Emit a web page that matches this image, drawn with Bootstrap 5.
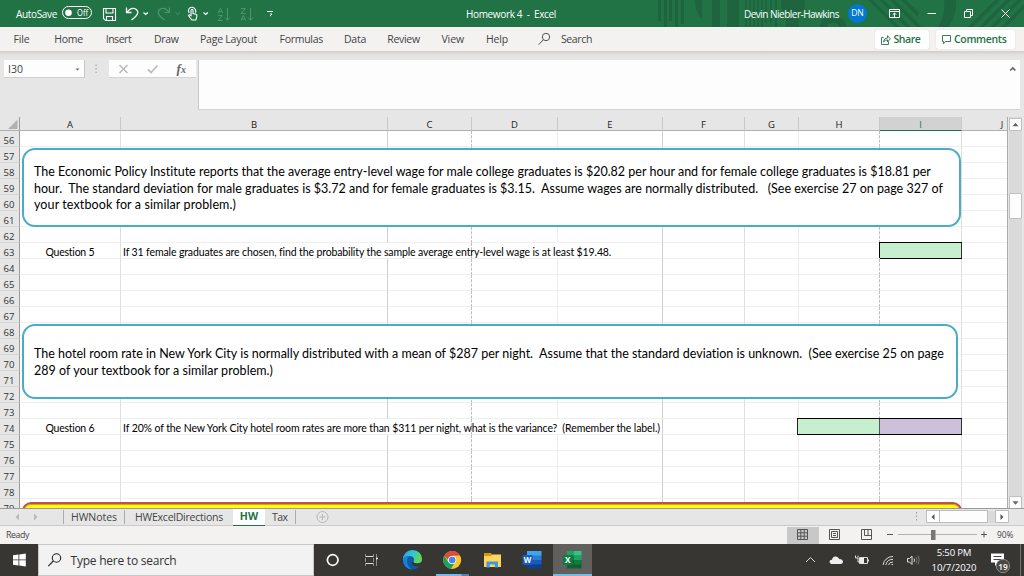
<!DOCTYPE html>
<html lang="en">
<head>
    <meta charset="UTF-8">
    <meta name="viewport" content="width=device-width, initial-scale=1.0">
    <link href="https://cdn.jsdelivr.net/npm/bootstrap@5.3.0/dist/css/bootstrap.min.css" rel="stylesheet">
    <title>Homework 4 - Excel</title>
    <style>
        body {
            width: 1024px;
            height: 576px;
            font-family: "Open Sans", "Noto Sans", sans-serif;
            font-size: 10px;
            line-height: 1;
            color: #444;
            background: #e6e6e6;
        }
        svg { display: block; flex: none; }
        [data-w] { display: inline-block; white-space: pre; flex: none; }

        /* title bar and ribbon */
        .title-bar { height: 27px; background: #217346; color: #fff; }
        .title-art { z-index: 0; }
        .title-bar > :not(.title-art) { position: relative; }
        .title-bar .user-name { margin-left: 188px; padding-top: 1px; }
        .autosave { margin-left: 16px; }
        .file-title { margin-left: 186px; }
        .avatar { width: 19px; height: 19px; margin: 0 8px 0 9px; background: #0078d4; font-size: 8.5px; }
        .ribbon { height: 24px; padding-left: 13.5px; background: #f3f2f1; font-size: 10.5px; }
        .ribbon-tabs { display: grid; grid-template-columns: 40.8px 51.4px 48.3px 46px 79.5px 64.5px 43.3px 54.2px 44.5px 22px; }
        .ribbon-btn { height: 19px; border-radius: 2px; background: #fff; color: #217346; font-weight: 600; box-shadow: 0 0 1px #bbb; }
        .share-btn { width: 54px; margin-left: auto; }
        .comments-btn { width: 79px; margin: 0 9.5px 0 7px; }

        /* formula bar */
        .formula-row { height: 66px; padding: 9px 4px 0; background: linear-gradient(#cfcdcb, #e0dfde 3px, #e6e6e6 7px); }
        .name-box { width: 81px; height: 18px; padding-left: 4px; background: #fdfdfd; border-right: 1px solid #c6c6c6; border-bottom: 1px solid #cfcfcf; font-size: 10.5px; }
        .name-box > span { padding-top: 1px; }
        .fx-box { height: 18px; background: #fdfdfd; border-bottom: 1px solid #d4d4d4; }
        .formula-input { width: 822px; height: 50px; margin-left: 2px; background: #fdfdfd; border-left: 1px solid #c6c6c6; border-bottom: 1px solid #d4d4d4; }

        /* worksheet */
        .sheet-area { height: 392px; }
        .sheet { width: 1008px; height: 391px; background: #fff; border-right: 1px solid #ababab; }
        .sheet-line { display: grid; grid-template-columns: 20px 101px 267px 84px 86px 105px 82px 54px 81px 82px 45px; }
        .col-heads { height: 14px; background: #e6e6e6; color: #222; font-size: 9.5px; }
        .col-heads > div { height: 14px; padding-top: 3px; text-align: center; border-right: 1px solid #c9c9c9; border-bottom: 1px solid #b0b0b0; }
        .col-heads > .corner { padding: 0; border-right-color: #9b9b9b; }
        .col-heads > .picked { background: #d2d2d2; color: #217346; border-bottom: 1px solid #217346; }
        .col-heads > .last-col { padding-left: 35px; border-right: 0; }
        .sheet-row { height: 16px; }
        .row-head { height: 16px; padding-top: 5px; padding-right: 1px; text-align: center; font-size: 9.5px; color: #333; background: #e6e6e6; border-right: 1px solid #9b9b9b; border-bottom: 1px solid #d6d6d6; }
        .cell { height: 16px; min-width: 0; white-space: nowrap; border-right: 1px solid #dedede; border-bottom: 1px solid #efefef; }
        .cell-B, .cell-E { border-right-color: #cfcfcf; }
        .cell-D, .cell-G { border-right-color: #ececec; }
        .cell-C, .cell-H { border-right: 1px dashed #bdbdbd; }
        .cell-J { border-right: 0; }
        .no-edge { border-right-color: transparent; }
        .cell-text { position: relative; z-index: 1; height: 15px; padding: 2px 0 0 2px; font-family: Lato, sans-serif; font-size: 10.5px; line-height: 14px; color: #000; }
        .cell-text > span { vertical-align: top; }
        .cell-A .cell-text { padding-left: 25.5px; }
        .answer { position: relative; z-index: 1; border: 0; }
        .answer.green { background: #c6efce; box-shadow: -1px -1px 0 #000, 0 -1px 0 #000, inset 0 -1px 0 #000, inset -1px 0 0 #333; }
        .answer.purple { background: #ccc0da; box-shadow: 0 -1px 0 #000, inset 0 -1px 0 #000, inset -1px 0 0 #333; }
        .answer.before { margin-left: -2px; box-shadow: 0 -1px 0 #000, inset 0 -1px 0 #000, inset 1px 0 0 #222, inset -1px 0 0 #555; }
        .note-shape { left: 22px; z-index: 2; background: #fff; border: 2px solid #4bacc6; border-radius: 13px; font-family: Lato, sans-serif; font-size: 12.5px; line-height: 16.6px; color: #000; }
        .note-wage { top: 31px; width: 939px; height: 79px; padding: 14px 0 0 10px; }
        .note-hotel { top: 207px; width: 936px; height: 75px; padding: 20px 0 0 10px; }
        .note-yellow { top: 385px; width: 940px; height: 30px; background: #ff0; border-color: #c0504d; border-radius: 9px; box-shadow: inset 0 1px 0 #d8a030; }

        /* scrollbars, sheet tabs, status */
        .v-scroll { width: 13px; margin-left: 1px; background: #dadada; }
        .sheet-tabs { height: 18px; background: #e6e6e6; border-top: 1px solid #9b9b9b; border-bottom: 1px solid #cacaca; margin-top: -1px; font-size: 10.5px; }
        .tab-notes { margin: 0 7px; }
        .tab-directions { margin-left: 10px; }
        .tab-on { height: 17px; width: 32px; background: #fff; color: #217346; font-weight: 700; border-bottom: 1px solid #217346; margin: 0 7px 0 10px; }
        .tab-tax { margin-right: 7px; }
        .tab-sep { width: 1px; height: 14px; background: #ababab; }
        .h-scroll { margin-left: auto; }
        .status-bar { height: 18px; padding-left: 6px; background: #f3f2f1; font-size: 8.8px; }

        /* taskbar */
        .taskbar { height: 32px; background: #383633; color: #fff; }
        .search-box { width: 276px; height: 32px; background: #f2f2f2; border: 1px solid #c8c8c8; color: #333; font-size: 12px; }
        .search-box > span { padding-top: 2px; }
        .clock { width: 56px; font-size: 9.6px; line-height: 15px; }
    </style>
</head>
<body class="d-flex flex-column overflow-hidden m-0">

    <header class="title-bar d-flex align-items-center position-relative overflow-hidden">
        <svg class="title-art position-absolute end-0 top-0" width="370" height="27" viewBox="654 0 370 27" fill="#1e643e">
            <path d="M658 0h3v21h-3zM664 0h3v27h-3zM669 0h3v21h-3zM675 0h3v27h-3zM681 0h3v24h-3z"/>
            <path d="M695 0h7v19q-7-6-7-19zM712 0h8v27h-8zM727 0h12v27h-12z"/>
            <path d="M745 0h2v27h-2zM749 0h2v27h-2zM753 0h2v27h-2zM757 0h2v27h-2zM761 0h2v27h-2zM765 0h2v23h-2zM770 0h2v23h-2zM775 0h2v27h-2z"/>
            <path d="M781 0h24v5q0 7-6 7v15h-13V12q-5 0-5-7z"/>
            <path d="M820 27q0-10 13-10t13 10h-7q0-4-6-4t-6 4z"/>
            <path d="M868 0h5l27 27h-5zM879 0h5l27 27h-5zM890 0h5l27 27h-5zM901 0h5l12 12v5z"/>
            <path d="M944 0h12q1 14-7 27h-11q8-12 6-27zM979 27l27-27h5l-27 27zM990 27l27-27h5l-27 27zM1001 27l23-23v5l-18 18zM968 27l27-27h5l-27 27z"/>
        </svg>
        <span class="autosave" data-w="41">AutoSave</span>
        <svg width="213" height="27" viewBox="57 0 213 27" fill="none" stroke="#fff">
            <rect x="62.500" y="6.500" width="29" height="12" rx="6"/>
            <circle cx="68.500" cy="12.700" r="3.300" fill="#fff" stroke="none"/>
            <text x="77" y="16" font-size="8.500" fill="#fff" stroke="none" textLength="11" lengthAdjust="spacingAndGlyphs">Off</text>
            <path d="M103.500 8.500h12v12h-10l-2-2zM106 8.500v4.500h7V8.500M106.500 20.500v-4h6v4" stroke-width="1.100"/>
            <path d="M126.500 7.500v5h5M127 12.300q3-4.300 6.500-4t4.300 3.700q.4 3-6.300 8" stroke-width="1.300"/>
            <path d="M143.500 12.500l2.200 2 2.200-2" stroke-width="1.200"/>
            <g stroke="#4f9470"><path d="M169.500 7.500v5h-5M169 12.300q-3-4.300-6.500-4t-4.300 3.700q-.4 3 6.300 8" stroke-width="1.200"/><path d="M175.500 12.500l2.200 2 2.200-2"/></g>
            <path d="M191 19l-2.500-3.500q1-1.500 2.500 0V10q1-1.500 2 0v3.500l3 .8q1.300.5.8 2.500l-1 3.200h-3.800zM189.200 12.800q-1.500-2-.2-4t3.500-1.500 3 2.400-.4 2.800" stroke-width="1.100"/>
            <path d="M203.500 12.500l2.200 2 2.200-2" stroke-width="1.200"/>
            <g stroke="#4f9470"><path d="M218 13.200l2.300-5 2.300 5M218.800 11.700h3M218 15.500h4.300l-4.300 5h4.500M227.500 8v12M225 17.500l2.500 2.700 2.500-2.700"/><path d="M241 8.500h4.300l-4.300 5h4.500M241 20.500l2.300-5 2.300 5M241.800 19h3M250.500 8v12M248 17.500l2.500 2.700 2.500-2.700"/></g>
            <path d="M267 11.500h6"/>
        </svg>
        <svg width="10" height="27" viewBox="270 0 10 27" fill="none" stroke="#fff"><path d="M266.500 11.500h6.500M267.500 14l2.300 2.300L272 14z"/></svg>
        <span class="file-title" data-w="90">Homework 4  -  Excel</span>
        <span class="user-name" data-w="95">Devin Niebler-Hawkins</span>
        <span class="avatar rounded-circle d-flex align-items-center justify-content-center">DN</span>
        <svg width="148" height="27" viewBox="875 0 148 27" fill="none" stroke="#fff">
            <path d="M889.500 9.500h10v8h-10zM889.500 11.500h10M894.500 17v-4M892.700 14.800l1.800-1.800 1.800 1.800"/>
            <path d="M927.500 13.500h8.500M964.500 11.500h6v6h-6zM966.500 11.500v-2h6v6h-2M1001.500 9.500l8 8M1009.500 9.500l-8 8"/>
        </svg>
    </header>

    <nav class="ribbon d-flex align-items-center">
        <div class="ribbon-tabs">
            <span data-w="16">File</span>
            <span data-w="28.500">Home</span>
            <span data-w="25.500">Insert</span>
            <span data-w="24.500">Draw</span>
            <span data-w="57">Page Layout</span>
            <span data-w="43.500">Formulas</span>
            <span data-w="22">Data</span>
            <span data-w="32.500">Review</span>
            <span data-w="22.500">View</span>
            <span data-w="22">Help</span>
        </div>
        <svg width="53" height="24" viewBox="508 27 53 24" fill="none" stroke="#555"><circle cx="546" cy="37" r="3.700"/><path d="M543.300 39.700l-4.600 5"/></svg>
        <span data-w="31">Search</span>
        <div class="ribbon-btn share-btn d-flex align-items-center">
            <svg width="19" height="19" viewBox="0 0 19 19" fill="none" stroke="#217346"><path d="M8.500 7.500h-2v7h7v-3M8.500 12q0-4 4-4V5.700l2.800 3.200-2.800 3v-2q-2.500 0-4 2.100z" stroke-width=".9"/></svg>
            <span data-w="27">Share</span>
        </div>
        <div class="ribbon-btn comments-btn d-flex align-items-center">
            <svg width="18.500" height="19" viewBox="0 0 18.500 19" fill="none" stroke="#217346"><path d="M6.500 5.500h8v6h-5l-2 2.300v-2.300h-1z" stroke-width=".9"/></svg>
            <span data-w="52.500">Comments</span>
        </div>
    </nav>

    <section class="formula-row d-flex align-items-start">
        <div class="name-box d-flex align-items-center">
            <span data-w="15">I30</span>
            <svg width="61" height="16" viewBox="23 60 61 16" fill="#666"><path d="M75.500 67.500h4l-2 2z"/></svg>
        </div>
        <svg width="24" height="18" viewBox="85 60 24 18" fill="#a8a8a8"><path d="M95.500 64.500h1.200v1.500h-1.200zM95.500 68h1.200v1.500h-1.200zM95.500 71.500h1.200v1.500h-1.200z"/></svg>
        <div class="fx-box">
            <svg width="87" height="17" viewBox="109 60 87 17" fill="none">
                <path d="M119.500 65l8 8M127.500 65l-8 8" stroke="#b5b5b5" stroke-width="1.300"/>
                <path d="M148 69.500l3 3 6.500-7" stroke="#bdbdbd" stroke-width="1.800"/>
                <text x="176.500" y="73" font-family="Liberation Serif, serif" font-size="13" font-style="italic" font-weight="700" fill="#666">f</text>
                <text x="181" y="73" font-family="Liberation Serif, serif" font-size="10" font-style="italic" font-weight="700" fill="#666">x</text>
            </svg>
        </div>
        <div class="formula-input d-flex justify-content-end">
            <svg width="14" height="20" viewBox="1006 60 14 20" fill="none" stroke="#666" stroke-width="1.700"><path d="M1010.200 70.500l2.600-2.500 2.600 2.500"/></svg>
        </div>
    </section>

    <main class="sheet-area d-flex">
        <div class="sheet position-relative overflow-hidden">
            <div class="sheet-line col-heads">
                <div class="corner"><svg width="19" height="13" viewBox="0 117 19 13" fill="#b2b2b2"><path d="M17.500 119.500v9.500H8z"/></svg></div>
                <div>A</div><div>B</div><div>C</div><div>D</div><div>E</div><div>F</div><div>G</div><div>H</div>
                <div class="picked">I</div><div class="last-col">J</div>
            </div>
            <div id="sheet-rows"></div>
            <div class="note-shape note-wage position-absolute">
                <span data-w="897">The Economic Policy Institute reports that the average entry-level wage for male college graduates is $20.82 per hour and for female college graduates is $18.81 per</span><br>
                <span data-w="909">hour.  The standard deviation for male graduates is $3.72 and for female graduates is $3.15.  Assume wages are normally distributed.   (See exercise 27 on page 327 of</span><br>
                <span data-w="202">your textbook for a similar problem.)</span>
            </div>
            <div class="note-shape note-hotel position-absolute">
                <span data-w="910">The hotel room rate in New York City is normally distributed with a mean of $287 per night.  Assume that the standard deviation is unknown.  (See exercise 25 on page</span><br>
                <span data-w="239">289 of your textbook for a similar problem.)</span>
            </div>
            <div class="note-shape note-yellow position-absolute"></div>
        </div>
        <svg class="v-scroll" width="13" height="392" viewBox="1009 117 13 392">
            <path d="M1009.500 118.500h12v12h-12zM1009.500 193.500h12v25h-12zM1009.500 496.500h12v12h-12z" fill="#fdfdfd" stroke="#c0c0c0"/>
            <path d="M1012.500 126.300l3-3.500 3 3.500zM1012.500 501.300l3 3.500 3-3.500z" fill="#666"/>
        </svg>
    </main>

    <section class="sheet-tabs d-flex align-items-center">
        <svg width="63" height="16" viewBox="0 509 63 16" fill="#b9b9b9"><path d="M19 513.500v7l-3.500-3.500zM34 513.500v7l3.500-3.500z"/></svg>
        <span class="tab-sep"></span>
        <span class="tab-notes" data-w="46">HWNotes</span>
        <span class="tab-sep"></span>
        <span class="tab-directions" data-w="88">HWExcelDirections</span>
        <span class="tab-on d-flex align-items-center justify-content-center"><span data-w="18.500">HW</span></span>
        <span class="tab-tax" data-w="15.500">Tax</span>
        <span class="tab-sep"></span>
        <svg width="34" height="16" viewBox="296 509 34 16" fill="none" stroke="#b9b9b9"><circle cx="322.500" cy="517" r="5.500"/><path d="M319.500 517h6M322.500 514v6"/></svg>
        <svg class="h-scroll" width="110" height="16" viewBox="914 509 110 16">
            <path d="M916.500 512v10" stroke="#999" stroke-dasharray="1.500 2"/>
            <path d="M940 511h55v12h-55z" fill="#dadada"/>
            <path d="M926.500 510.500h13v12h-13zM939.500 510.500h48v12h-48zM995.500 510.500h13v12h-13z" fill="#fdfdfd" stroke="#bdbdbd"/>
            <path d="M934.500 514v6l-3-3zM1000.500 514v6l3-3z" fill="#555"/>
        </svg>
    </section>

    <section class="status-bar d-flex align-items-center">
        <span data-w="23">Ready</span>
        <svg class="ms-auto" width="237" height="18" viewBox="787 526 237 18" fill="none" stroke="#555">
            <path d="M787 527h32v17h-32z" fill="#c8c8c8" stroke="none"/>
            <path d="M797.500 529.500h10v10h-10zM797.500 532.800h10M797.500 536.200h10M800.800 529.500v10M804.200 529.500v10"/>
            <path d="M829.500 529.500h10v10h-10zM831.500 531.500h6v6h-6zM833 533.500h3M833 535.500h3"/>
            <path d="M861.500 529.500h10v10h-10zM864.500 529.500v6h3.500v-6M868 535.500h3.500"/>
            <path d="M887 534.500h6M981 534.500h6M984 531.500v6"/>
            <path d="M898 534.500h79" stroke="#b0b0b0"/>
            <path d="M931 530h4.500v10H931z" fill="#777" stroke="none"/>
            <text x="997" y="538" font-size="9" fill="#444" stroke="none" textLength="16.500" lengthAdjust="spacingAndGlyphs">90%</text>
        </svg>
    </section>

    <footer class="taskbar d-flex align-items-center">
        <svg width="38" height="32" viewBox="0 544 38 32" fill="#fff"><path d="M13 555.300l5.500-.8v5h-5.500zM19.300 554.400l6.500-.9v6h-6.500zM13 560.300h5.500v5.200l-5.500-.8zM19.300 560.300h6.500v6.200l-6.500-.9z"/></svg>
        <div class="search-box d-flex align-items-center">
            <svg width="31.500" height="30" viewBox="39 545 31.500 30" fill="none" stroke="#222" stroke-width="1.100"><circle cx="56.500" cy="558" r="4.200"/><path d="M53.300 561l-5 5.200"/></svg>
            <span data-w="106">Type here to search</span>
        </div>
        <svg width="478" height="32" viewBox="314 544 478 32" fill="none">
            <defs>
                <linearGradient id="edge-top" x1="0" y1="0" x2="1" y2="0.4"><stop offset="0" stop-color="#1b9de2"/><stop offset=".5" stop-color="#35c1e0"/><stop offset="1" stop-color="#62d84e"/></linearGradient>
            </defs>
            <circle cx="332.700" cy="560" r="5.300" stroke="#fff" stroke-width="1.700"/>
            <g stroke="#ddd"><path d="M365.500 556.500h8M365.500 563.500h8"/><path d="M365.500 554v2.500M373.500 554v2.500M365.500 566v-2.500M373.500 566v-2.500M365.500 558v4M373.500 558v4M376.500 554v12" stroke="#999" stroke-width=".9"/><path d="M376 558.500h2" stroke="#fff" stroke-width="1.500"/></g>
            <g>
                <circle cx="412.300" cy="560" r="9.500" fill="#0c59a4"/>
                <path d="M402.800 559.500q1-9 9.500-9.500 9 .5 9.800 8.700 0 4.800-5 4.800-3.700 0-3.700-1.700 1.300-1.800.3-3.800-1.200-2-4.200-2-4.700 0-6.700 3.500z" fill="url(#edge-top)"/>
                <path d="M402.800 559.500q2-3.500 6.700-3.500-3.300 3-2.200 7.200 1.200 4.600 5 6.300-8.500-.5-9.500-10z" fill="#1683d8"/>
                <path d="M413.400 561.800q0 1.700 3.700 1.700 3 0 4.400-1.500l1 1.500-2.500 2.500q-7 1-8.500-2.500-.3-2 1.900-1.700z" fill="#383633"/>
            </g>
            <g>
                <circle cx="452.200" cy="560" r="9" fill="#fbc52c"/>
                <path d="M444.400 555.500a9 9 0 0 1 15.600 0l-7.800 .3-4 4.200z" fill="#dd4b3e"/>
                <path d="M444.400 555.500a9 9 0 0 0 6.500 13.400l4-6.600-6.600 0z" fill="#1fa15d"/>
                <circle cx="452.200" cy="560" r="4.100" fill="#fff"/><circle cx="452.200" cy="560" r="3.300" fill="#4285f4"/>
            </g>
            <path d="M436 574h33v2h-33z" fill="#76b9ed"/><path d="M461.500 574h7.500v2h-7.500z" fill="#5a83a6"/>
            <g><path d="M484 553h7l1.500 2H501v4h-17z" fill="#d9960c"/><path d="M484 556h7l1.500-1.500H501V567h-17z" fill="#ffd35c"/><path d="M486.500 567.500v-6h11.500v6h-3.200v-3h-5v3z" fill="#3a9be0"/></g>
            <g><path d="M527 551h14.500v5H527z" fill="#41a5ee"/><path d="M527 555.500h14.500v4.500H527z" fill="#2b7cd3"/><path d="M527 560h14.500v4.500H527z" fill="#185abd"/><path d="M527 564.500h14.500v4H527z" fill="#103f91"/><rect x="522.500" y="555" width="10" height="10" rx="1" fill="#185abd"/><text x="523.700" y="563" font-size="8" font-weight="700" fill="#fff" textLength="7.500" lengthAdjust="spacingAndGlyphs">W</text></g>
            <path d="M553 544h39v32h-39z" fill="#62605d"/><path d="M553 574h39v2h-39z" fill="#76b9ed"/>
            <g><path d="M567 551h7v9h-7z" fill="#21a366"/><path d="M574 551h7.500v4.500H574z" fill="#33c481"/><path d="M574 555.500h7.500v4.500H574z" fill="#21a366"/><path d="M567 555.500h7v4.500h-7z" fill="#107c41"/><path d="M567 560h14.500v8.500H567z" fill="#185c37"/><path d="M574 560h7.500v4.500H574z" fill="#107c41"/><rect x="562.800" y="555" width="10" height="10" rx="1" fill="#107c41"/><text x="565" y="563" font-size="8" font-weight="700" fill="#fff" textLength="5.500" lengthAdjust="spacingAndGlyphs">X</text></g>
        </svg>
        <svg width="134" height="32" viewBox="792 544 134 32" fill="none" stroke="#ddd">
            <path d="M806 562l4.500-4.500 4.500 4.500"/>
            <path d="M831.500 564q-2-.3-2-2.200t2.500-2q.5-3 3.300-3.300t4 2.500q3.500.3 3.700 2.700 0 2-2 2.300z" fill="#eee" stroke="none"/>
            <path d="M859.500 557.500h8v6h-8zM855.500 555.500v2.500h2.500v4h2M858 555.500v2M868.500 559.500v2"/><path d="M860 558h4v5h-4z" fill="#eee" stroke="none"/>
            <path d="M883 565a10 10 0 0 1 10-8.500M885.800 565a7.300 7.300 0 0 1 7.200-5.700M888.500 565a4.500 4.500 0 0 1 4.500-3M891.500 564.500h1.500"/>
            <path d="M907.500 558.500h2l2.500-2.500v8.500l-2.500-2.500h-2zM914 558.500q1 1.500 0 3.500"/><path d="M916 557q2 3 0 6.500M918 555.500q2.500 4.500 0 9" stroke="#888" stroke-width=".8"/>
        </svg>
        <div class="clock text-center me-auto">
            <div><span data-w="34.500">5:50 PM</span></div>
            <div><span data-w="45">10/7/2020</span></div>
        </div>
        <svg width="37" height="32" viewBox="987 544 37 32">
            <path d="M991 553.500h13v9h-5l-4 3.500v-3.500h-4z" fill="#fff"/><path d="M993.500 556.500h8M993.500 559.500h8" stroke="#444"/>
            <circle cx="1003" cy="566" r="6.700" fill="#4a4845" stroke="#888"/>
            <text x="998.300" y="569.500" font-size="9.500" font-weight="600" fill="#fff" textLength="9.500" lengthAdjust="spacingAndGlyphs">19</text>
            <path d="M1020.500 544v32" stroke="#77756f"/>
        </svg>
    </footer>

    <script src="https://cdn.jsdelivr.net/npm/bootstrap@5.3.0/dist/js/bootstrap.bundle.min.js"></script>
    <script>
        const columns = 'ABCDEFGHIJ'.split('');
        const texts = {
            A63: ['Question 5', 49],
            B63: ['If 31 female graduates are chosen, find the probability the sample average entry-level wage is at least $19.48.', 488],
            A74: ['Question 6', 49],
            B74: ['If 20% of the New York City hotel room rates are more than $311 per night, what is the variance?  (Remember the label.)', 537]
        };
        const classes = {
            B63: 'no-edge', D63: 'no-edge', B74: 'no-edge', D74: 'no-edge',
            I63: 'answer green', H74: 'answer green before', I74: 'answer purple'
        };

        let html = '';
        for (let row = 56; row <= 79; row++) {
            html += '<div class="sheet-line sheet-row"><div class="row-head">' + row + '</div>';
            for (const col of columns) {
                const key = col + row;
                const text = texts[key];
                html += '<div class="cell cell-' + col + ' ' + (classes[key] || '') + '">';
                if (text) {
                    html += '<div class="cell-text"><span data-w="' + text[1] + '">' + text[0] + '</span></div>';
                }
                html += '</div>';
            }
            html += '</div>';
        }
        document.getElementById('sheet-rows').innerHTML = html;

        // Track each label out to its data-w width
        document.querySelectorAll('[data-w]').forEach(function(label) {
            const range = document.createRange();
            range.selectNodeContents(label);
            const width = parseFloat(label.dataset.w);
            const natural = range.getBoundingClientRect().width;
            label.style.letterSpacing = (width - natural) / label.textContent.length + 'px';
            label.style.width = width + 'px';
        });
    </script>
</body>
</html>
